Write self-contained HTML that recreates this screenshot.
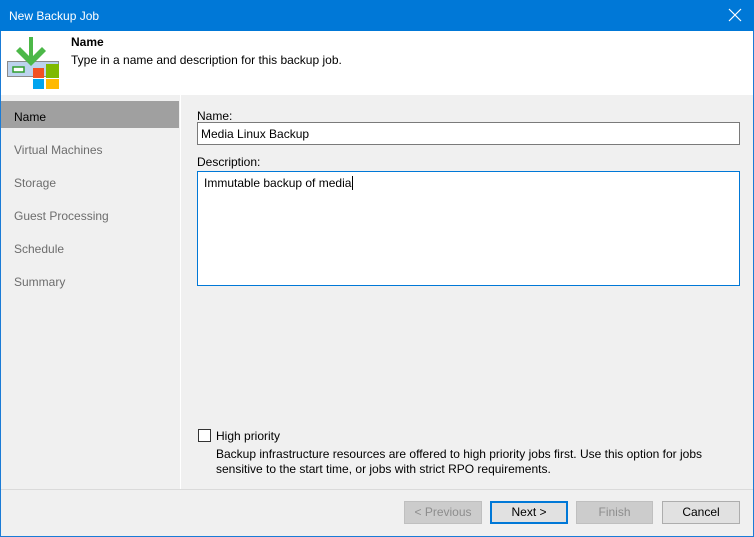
<!DOCTYPE html>
<html><head><style>
*{margin:0;padding:0;box-sizing:border-box}
body{width:754px;height:537px;overflow:hidden;font-family:"Liberation Sans",sans-serif;font-size:12px;color:#000;background:#f0f0f0;position:relative}
.win{position:absolute;left:0;top:0;width:754px;height:537px;border:1px solid #1a7bd6}
.title{position:absolute;left:0;top:0;width:754px;height:31px;background:#0078d7;color:#fff;font-size:12px;padding:9px 0 0 9px}
.close{position:absolute;right:12px;top:8px;width:14px;height:14px}
.hdr{position:absolute;left:1px;top:31px;width:752px;height:64px;background:#fff}
.abs{position:absolute}
.nav{position:absolute;left:14px;color:#6d6d6d;font-size:12px}
.sel{position:absolute;left:1px;top:101px;width:178px;height:27px;background:#a0a0a0}
.vsep{position:absolute;left:180px;top:95px;width:1px;height:394px;background:#fff}
.hsep{position:absolute;left:1px;top:489px;width:752px;height:1px;background:#dadada}
.inp{position:absolute;background:#fff;border:1px solid #7a7a7a}
.btn{position:absolute;top:501px;height:23px;border:1px solid #adadad;background:#e1e1e1;text-align:center;line-height:21px;font-size:12px}
.dis{background:#cccccc;border-color:#bfbfbf;color:#8d8d8d}
</style></head><body>
<div class="win"></div>
<div class="title">New Backup Job
<svg class="close" viewBox="0 0 14 14"><path d="M1 1L13 13M13 1L1 13" stroke="#fff" stroke-width="1.2"/></svg></div>
<div class="hdr">
<div class="abs" style="left:70px;top:4px;font-weight:bold">Name</div>
<div class="abs" style="left:70px;top:22px">Type in a name and description for this backup job.</div>
</div>
<svg class="abs" style="left:0;top:0" width="70" height="95" viewBox="0 0 70 95">
<rect x="7.5" y="61.5" width="51" height="15" fill="#bcd3ee" stroke="#8a8a8a"/>
<rect x="13" y="67" width="11" height="5" fill="#fff" stroke="#2f9e2f" stroke-width="1.5"/>
<path d="M29 37h4v19l9-9 4 4-15 15-15-15 4-4 9 9z" fill="#4cb848"/>
<rect x="33" y="68" width="11" height="10" fill="#f25022"/>
<rect x="46" y="64" width="13" height="14" fill="#7fba00"/>
<rect x="33" y="79" width="11" height="10" fill="#00a4ef"/>
<rect x="46" y="79" width="13" height="10" fill="#ffb900"/>
</svg>
<div class="sel"></div>
<div class="nav" style="top:110px;color:#000">Name</div>
<div class="nav" style="top:143px">Virtual Machines</div>
<div class="nav" style="top:176px">Storage</div>
<div class="nav" style="top:209px">Guest Processing</div>
<div class="nav" style="top:242px">Schedule</div>
<div class="nav" style="top:275px">Summary</div>
<div class="vsep"></div>
<div class="abs" style="left:197px;top:109px">Name:</div>
<div class="inp" style="left:197px;top:122px;width:543px;height:23px;padding:4px 0 0 3px">Media Linux Backup</div>
<div class="abs" style="left:197px;top:155px">Description:</div>
<div class="inp" style="left:197px;top:171px;width:543px;height:115px;padding:4px 0 0 6px;border-color:#0078d7">Immutable backup of media<span style="border-left:1px solid #000;margin-left:1px"></span></div>
<div class="inp" style="left:198px;top:429px;width:13px;height:13px;border-color:#333"></div>
<div class="abs" style="left:216px;top:429px">High priority</div>
<div class="abs" style="left:216px;top:447px;line-height:15px;width:520px">Backup infrastructure resources are offered to high priority jobs first. Use this option for jobs sensitive to the start time, or jobs with strict RPO requirements.</div>
<div class="hsep"></div>
<div class="btn dis" style="left:404px;width:78px">&lt; Previous</div>
<div class="btn" style="left:490px;width:78px;border:2px solid #0078d7;line-height:19px">Next &gt;</div>
<div class="btn dis" style="left:576px;width:77px">Finish</div>
<div class="btn" style="left:662px;width:78px">Cancel</div>
</body></html>
